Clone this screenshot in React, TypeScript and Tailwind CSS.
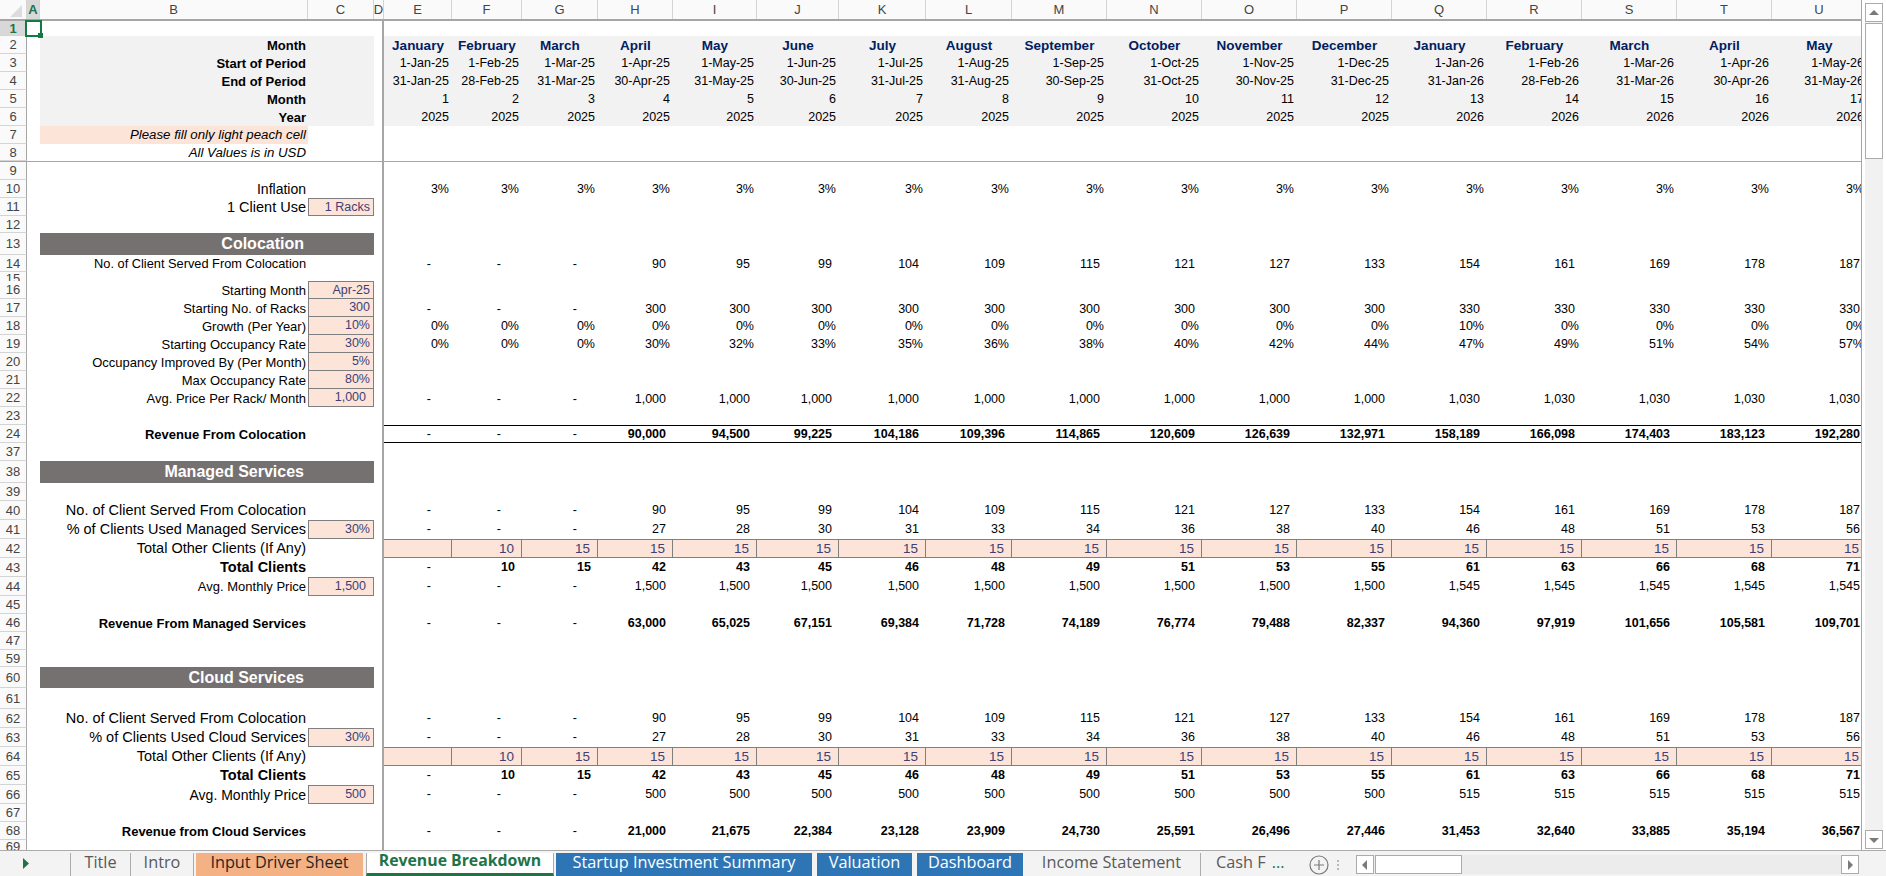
const COLS = ["A", "B", "C", "D", "E", "F", "G", "H", "I", "J", "K", "L", "M", "N", "O", "P", "Q", "R", "S", "T", "U"];
const GRID = "grid grid-cols-[27px_13px_268px_66px_10px_68px_70px_76px_75px_84px_82px_87px_86px_repeat(9,95px)]";

type Row = {
    n: string;
    h: string;
    label?: string;
    labelCls?: string;
    input?: string;
    inputPad?: string;
    inputTop?: boolean;
    section?: boolean;
    band?: boolean;
    peachLabel?: boolean;
    vals?: string[];
    nudge?: boolean;
    kind?: "month" | "date" | "pct" | "num" | "bold" | "total" | "peach";
    frozen?: boolean;
};

const rep = (v: string, n: number) => Array(n).fill(v) as string[];
const w = (s: string) => s.split(" ");

const clients = w("- - - 90 95 99 104 109 115 121 127 133 154 161 169 178 187");
const used = w("- - - 27 28 30 31 33 34 36 38 40 46 48 51 53 56");
const other = ["", "10", ...rep("15", 15)];
const total = w("- 10 15 42 43 45 46 48 49 51 53 55 61 63 66 68 71");

const b13 = "text-[13px] font-bold";
const r13 = "text-[13px]";
const r14 = "text-[14.5px]";
const ph18 = "h-[18px]";

const rows: Row[] = [
    { n: "1", h: "h-[15px]" },
    { n: "2", h: ph18, band: true, label: "Month", labelCls: b13, kind: "month", vals: w("January February March April May June July August September October November December January February March April May") },
    { n: "3", h: ph18, band: true, label: "Start of Period", labelCls: b13, kind: "date", vals: w("1-Jan-25 1-Feb-25 1-Mar-25 1-Apr-25 1-May-25 1-Jun-25 1-Jul-25 1-Aug-25 1-Sep-25 1-Oct-25 1-Nov-25 1-Dec-25 1-Jan-26 1-Feb-26 1-Mar-26 1-Apr-26 1-May-26") },
    { n: "4", h: ph18, band: true, label: "End of Period", labelCls: b13, kind: "date", vals: w("31-Jan-25 28-Feb-25 31-Mar-25 30-Apr-25 31-May-25 30-Jun-25 31-Jul-25 31-Aug-25 30-Sep-25 31-Oct-25 30-Nov-25 31-Dec-25 31-Jan-26 28-Feb-26 31-Mar-26 30-Apr-26 31-May-26") },
    { n: "5", h: ph18, band: true, label: "Month", labelCls: b13, kind: "date", vals: w("1 2 3 4 5 6 7 8 9 10 11 12 13 14 15 16 17") },
    { n: "6", h: ph18, band: true, label: "Year", labelCls: b13, kind: "date", vals: [...rep("2025", 12), ...rep("2026", 5)] },
    { n: "7", h: ph18, peachLabel: true, label: "Please fill only light peach cell", labelCls: "text-[13.25px] italic" },
    { n: "8", h: ph18, label: "All Values is in USD", labelCls: "text-[13.25px] italic", frozen: true },
    { n: "9", h: ph18 },
    { n: "10", h: ph18, label: "Inflation", labelCls: "text-[14px]", kind: "pct", vals: rep("3%", 17) },
    { n: "11", h: ph18, label: "1 Client Use", labelCls: r14, input: "1 Racks", inputTop: true },
    { n: "12", h: "h-[17px]" },
    { n: "13", h: "h-[22px]", section: true, label: "Colocation" },
    { n: "14", h: "h-[17px]", label: "No. of Client Served From Colocation", labelCls: "text-[12.8px] pt-[2px]", kind: "num", vals: clients, nudge: true },
    { n: "15", h: "h-[9px]" },
    { n: "16", h: ph18, label: "Starting Month", labelCls: r13, input: "Apr-25", inputTop: true },
    { n: "17", h: ph18, label: "Starting No. of Racks", labelCls: r13, input: "300", kind: "num", vals: ["-", "-", "-", ...rep("300", 9), ...rep("330", 5)], nudge: true },
    { n: "18", h: ph18, label: "Growth (Per Year)", labelCls: r13, input: "10%", kind: "pct", vals: [...rep("0%", 12), "10%", ...rep("0%", 4)] },
    { n: "19", h: ph18, label: "Starting Occupancy Rate", labelCls: r13, input: "30%", kind: "pct", vals: w("0% 0% 0% 30% 32% 33% 35% 36% 38% 40% 42% 44% 47% 49% 51% 54% 57%") },
    { n: "20", h: ph18, label: "Occupancy Improved By (Per Month)", labelCls: r13, input: "5%" },
    { n: "21", h: ph18, label: "Max Occupancy Rate", labelCls: r13, input: "80%" },
    { n: "22", h: ph18, label: "Avg. Price Per Rack/ Month", labelCls: r13, input: "1,000", inputPad: "pr-[7px]", kind: "num", vals: ["-", "-", "-", ...rep("1,000", 9), ...rep("1,030", 5)], nudge: true },
    { n: "23", h: ph18 },
    { n: "24", h: ph18, label: "Revenue From Colocation", labelCls: b13, kind: "total", vals: w("- - - 90,000 94,500 99,225 104,186 109,396 114,865 120,609 126,639 132,971 158,189 166,098 174,403 183,123 192,280") },
    { n: "37", h: ph18 },
    { n: "38", h: "h-[22px]", section: true, label: "Managed Services" },
    { n: "39", h: ph18 },
    { n: "40", h: "h-[19px]", label: "No. of Client Served From Colocation", labelCls: r14, kind: "num", vals: clients },
    { n: "41", h: "h-[19px]", label: "% of Clients Used Managed Services", labelCls: r14, input: "30%", inputTop: true, kind: "num", vals: used },
    { n: "42", h: "h-[19px]", label: "Total Other Clients (If Any)", labelCls: r14, kind: "peach", vals: other },
    { n: "43", h: "h-[19px]", label: "Total Clients", labelCls: "text-[14.5px] font-bold", kind: "bold", vals: total },
    { n: "44", h: "h-[19px]", label: "Avg. Monthly Price", labelCls: r13, input: "1,500", inputPad: "pr-[7px]", inputTop: true, kind: "num", vals: ["-", "-", "-", ...rep("1,500", 9), ...rep("1,545", 5)] },
    { n: "45", h: ph18 },
    { n: "46", h: ph18, label: "Revenue From Managed Services", labelCls: b13, kind: "bold", vals: w("- - - 63,000 65,025 67,151 69,384 71,728 74,189 76,774 79,488 82,337 94,360 97,919 101,656 105,581 109,701") },
    { n: "47", h: ph18 },
    { n: "59", h: "h-[17px]" },
    { n: "60", h: "h-[21px]", section: true, label: "Cloud Services" },
    { n: "61", h: "h-[21px]" },
    { n: "62", h: "h-[19px]", label: "No. of Client Served From Colocation", labelCls: r14, kind: "num", vals: clients },
    { n: "63", h: "h-[19px]", label: "% of Clients Used Cloud Services", labelCls: r14, input: "30%", inputTop: true, kind: "num", vals: used },
    { n: "64", h: "h-[19px]", label: "Total Other Clients (If Any)", labelCls: r14, kind: "peach", vals: other },
    { n: "65", h: "h-[19px]", label: "Total Clients", labelCls: "text-[14.5px] font-bold", kind: "bold", vals: total },
    { n: "66", h: "h-[19px]", label: "Avg. Monthly Price", labelCls: "text-[14px]", input: "500", inputPad: "pr-[7px]", inputTop: true, kind: "num", vals: ["-", "-", "-", ...rep("500", 9), ...rep("515", 5)] },
    { n: "67", h: ph18 },
    { n: "68", h: ph18, label: "Revenue from Cloud Services", labelCls: b13, kind: "bold", vals: w("- - - 21,000 21,675 22,384 23,128 23,909 24,730 25,591 26,496 27,446 31,453 32,640 33,885 35,194 36,567") },
    { n: "69", h: "h-[10px]" },
];

const ValueCell = ({ v, kind, band, nudge }: { v: string; kind: Row["kind"]; band?: boolean; nudge?: boolean }) => {
    const bg = band ? "bg-[#f2f2f2]" : "";
    if (kind === "month") {
        return <div className={`${bg} flex items-center justify-center pt-[2px] text-[13.5px] font-bold text-[#002060]`}>{v}</div>;
    }
    if (kind === "peach") {
        return <div className="flex items-center justify-end border-y border-r border-[#7f7f7f] bg-[#fde4d8] pr-[7px] text-[13.5px] text-[#3f3f76]">{v}</div>;
    }
    if (kind === "total") {
        return <div className={`flex items-center justify-end border-y border-black text-[12.5px] ${v === "-" ? "pr-[21px]" : "pr-[7px] font-bold"}`}>{v}</div>;
    }
    const pad = v === "-" ? "pr-[21px]" : kind === "date" || kind === "pct" ? "pr-[3px]" : "pr-[7px]";
    const weight = kind === "bold" && v !== "-" ? "font-bold" : "";
    return <div className={`${bg} ${pad} ${weight} ${nudge ? "pt-[2px]" : ""} flex items-center justify-end text-[12.5px]`}>{v}</div>;
};

const SheetRow = ({ row }: { row: Row }) => {
    const selected = row.n === "1";
    return (
        <div className={`${GRID} ${row.h} ${row.frozen ? "border-b border-[#a6a6a6]" : ""} shrink-0 overflow-hidden text-black`}>
            <div className={`flex items-center justify-center border-r border-b border-r-[#a6a6a6] border-b-[#d4d4d4] text-[13px] ${selected ? "bg-[#d8d8d8] font-bold text-[#217346]" : "bg-[#fafafa] text-[#444444]"}`}>{row.n}</div>
            <div />
            {row.section ? (
                <div className="col-span-2 flex items-center justify-end bg-[#767171] pr-[70px] text-[16px] font-bold text-white">{row.label}</div>
            ) : (
                <>
                    <div className={`flex items-center justify-end whitespace-nowrap pr-[2px] ${row.labelCls ?? ""} ${row.band ? "bg-[#f2f2f2]" : ""} ${row.peachLabel ? "bg-[#fde4d8]" : ""}`}>{row.label}</div>
                    {row.input ? (
                        <div className={`flex items-center justify-end border-x border-b border-[#7f7f7f] bg-[#fde4d8] text-[12.5px] text-[#3f3f76] ${row.inputTop ? "border-t" : ""} ${row.inputPad ?? "pr-[3px]"}`}>{row.input}</div>
                    ) : (
                        <div className={row.band ? "bg-[#f2f2f2]" : ""} />
                    )}
                </>
            )}
            <div className="border-r-2 border-[#a6a6a6]" />
            {row.vals
                ? row.vals.map((v, i) => <ValueCell key={i} v={v} kind={row.kind} band={row.band} nudge={row.nudge} />)
                : null}
        </div>
    );
};

const Tab = ({ label, cls }: { label: string; cls: string }) => (
    <div className={`flex h-full shrink-0 items-center justify-center whitespace-nowrap pb-[4px] ${cls}`}>{label}</div>
);

const Arrow = ({ dir, cls }: { dir: "up" | "down" | "left" | "right"; cls?: string }) => {
    const pts = { up: "0,7 5,2 10,7", down: "0,3 5,8 10,3", left: "7,0 2,5 7,10", right: "3,0 8,5 3,10" }[dir];
    return (
        <svg width="10" height="10" viewBox="0 0 10 10" className={cls}>
            <polygon points={pts} fill="#7a7a7a" />
        </svg>
    );
};

const App = () => {
    return (
        <div className="flex h-screen w-screen flex-col overflow-hidden bg-white font-['Liberation_Sans',Arial,sans-serif] leading-none">
            <div className="flex h-[850px] shrink-0">
                <div className="relative w-[1862px] shrink-0 overflow-hidden border-r border-[#a6a6a6]">
                    <div className={`${GRID} h-[21px] border-b-2 border-[#a6a6a6] text-[13px] text-[#444444]`}>
                        <div className="flex items-end justify-end border-r border-[#d4d4d4] bg-[#fafafa] pr-[4px] pb-[2px]">
                            <svg width="12" height="12" viewBox="0 0 12 12"><polygon points="12,0 12,12 0,12" fill="#dcdcdc" /></svg>
                        </div>
                        {COLS.map((c) => (
                            <div key={c} className={`flex items-center justify-center border-r border-[#d4d4d4] ${c === "A" ? "bg-[#d8d8d8] font-bold text-[#217346]" : "bg-[#fafafa]"}`}>{c}</div>
                        ))}
                    </div>
                    {rows.map((row) => <SheetRow key={row.n} row={row} />)}
                    <div className="absolute top-[20px] left-[25px] h-[17px] w-[17px] border-2 border-[#107c41]">
                        <div className="absolute -right-[3px] -bottom-[3px] h-[5px] w-[5px] bg-[#107c41]" />
                    </div>
                </div>
                <div className="flex flex-1 flex-col px-[3px] pt-[3px] pb-[1px]">
                    <div className="flex h-[19px] shrink-0 items-center justify-center border border-[#ababab]"><Arrow dir="up" /></div>
                    <div className="flex flex-1 flex-col bg-[#f1f1f1]">
                        <div className="mt-[1px] h-[136px] border border-[#ababab] bg-white" />
                    </div>
                    <div className="flex h-[19px] shrink-0 items-center justify-center border border-[#ababab]"><Arrow dir="down" /></div>
                </div>
            </div>
            <div className="flex h-[26px] shrink-0 items-stretch border-t border-[#ababab] bg-[#f3f3f3] font-['Open_Sans',sans-serif] text-[16.3px] text-[#595959]">
                <div className="flex w-[70px] shrink-0 items-center pl-[23px]">
                    <svg width="6" height="11" viewBox="0 0 6 11"><polygon points="0,0 6,5.5 0,11" fill="#217346" /></svg>
                </div>
                <div className="flex flex-1 items-stretch pt-[2px]">
                    <Tab label="Title" cls="w-[61px] border-x border-[#ababab]" />
                    <Tab label="Intro" cls="w-[63px] border-r border-[#ababab]" />
                    <Tab label="Input Driver Sheet" cls="ml-[2px] w-[167px] bg-[#f4b183] text-[#262626]" />
                    <Tab label="Revenue Breakdown" cls="ml-[3px] w-[188px] border-x border-b-[3px] border-x-[#ababab] border-b-[#217346] bg-white text-[15.8px] font-bold text-[#217346]" />
                    <Tab label="Startup Investment Summary" cls="ml-[2px] w-[256px] bg-[#2e75b6] text-white" />
                    <Tab label="Valuation" cls="ml-[5px] w-[95px] bg-[#2e75b6] text-white" />
                    <Tab label="Dashboard" cls="ml-[5px] w-[106px] bg-[#2e75b6] text-white" />
                    <Tab label="Income Statement" cls="w-[178px] border-r border-[#ababab]" />
                    <div className="flex h-full w-[101px] shrink-0 items-center whitespace-nowrap pb-[4px] pl-[15px]">
                        Cash F
                        <span className="ml-[6px] text-[#217346]">...</span>
                    </div>
                    <div className="flex w-[54px] shrink-0 items-center pl-[7px]">
                        <svg width="20" height="20" viewBox="0 0 20 20" fill="none" stroke="#7a7a7a" strokeWidth="1.2">
                            <circle cx="10" cy="10" r="9" />
                            <path d="M10 5v10M5 10h10" />
                        </svg>
                        <svg width="4" height="12" viewBox="0 0 4 12" className="ml-[7px]">
                            <circle cx="2" cy="2" r="1" fill="#a6a6a6" /><circle cx="2" cy="6" r="1" fill="#a6a6a6" /><circle cx="2" cy="10" r="1" fill="#a6a6a6" />
                        </svg>
                    </div>
                    <div className="mt-[2px] flex h-[19px] w-[503px] shrink-0 bg-[#ececec]">
                        <div className="flex w-[18px] items-center justify-center border border-[#ababab] bg-white"><Arrow dir="left" /></div>
                        <div className="ml-[1px] w-[87px] border border-[#ababab] bg-white" />
                        <div className="flex-1" />
                        <div className="flex w-[18px] items-center justify-center border border-[#ababab] bg-white"><Arrow dir="right" /></div>
                    </div>
                </div>
            </div>
        </div>
    );
};

export default App;
